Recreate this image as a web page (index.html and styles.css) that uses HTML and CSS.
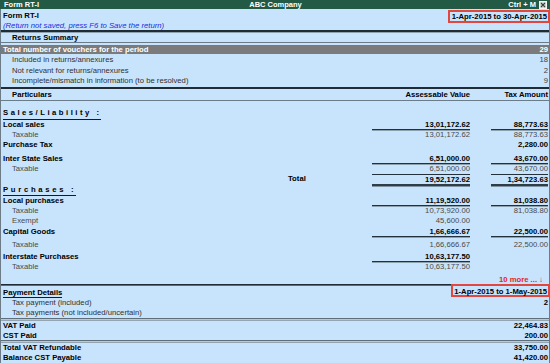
FILE: index.html
```html
<!DOCTYPE html>
<html>
<head>
<meta charset="utf-8">
<link rel="stylesheet" href="styles.css">
</head>
<body>
<div class="titlebar">
  <span class="tb-l">Form RT-I</span>
  <span class="tb-c">ABC Company</span>
  <span class="tb-r">Ctrl + M
    <svg class="closebox" width="8" height="8" viewBox="0 0 8 8"><rect x="0.5" y="0.5" width="7" height="7" fill="#d3dbd8" stroke="#f4f4f4"/><path d="M2 2 L6 6 M6 2 L2 6" stroke="#33403a" stroke-width="1.1"/></svg>
  </span>
</div>
<div class="win">
  <div class="head">
    <div class="head-l">
      <div class="b">Form RT-I</div>
      <div class="note">(Return not saved, press F6 to Save the return)</div>
    </div>
    <div class="period b">1-Apr-2015 to 30-Apr-2015</div>
  </div>
  <div class="rule-dark"></div>
  <div class="sec-title b">Returns Summary</div>
  <div class="rule-thin"></div>
  <div class="graybar"><span class="lbl">Total number of vouchers for the period</span><span class="ta">29</span></div>
  <div class="summary">
    <div class="row srow"><span class="lbl ind">Included in returns/annexures</span><span class="ta">18</span></div>
    <div class="row srow"><span class="lbl ind">Not relevant for returns/annexures</span><span class="ta">2</span></div>
    <div class="row srow"><span class="lbl ind">Incomplete/mismatch in information (to be resolved)</span><span class="ta">9</span></div>
  </div>
  <div class="rule-dark2"></div>
  <div class="row colhead b"><span class="lbl ind">Particulars</span><span class="av">Assessable Value</span><span class="ta">Tax Amount</span></div>
  <div class="rule-thin"></div>

  <div class="row group-title first"><span class="gt">Sales/Liability :</span></div>
  <div class="row b"><span class="lbl">Local sales</span><span class="av u">13,01,172.62</span><span class="ta u">88,773.63</span></div>
  <div class="row sub"><span class="lbl ind">Taxable</span><span class="av">13,01,172.62</span><span class="ta">88,773.63</span></div>
  <div class="row b"><span class="lbl">Purchase Tax</span><span class="av"></span><span class="ta">2,280.00</span></div>
  <div class="row b mt4"><span class="lbl">Inter State Sales</span><span class="av u">6,51,000.00</span><span class="ta u">43,670.00</span></div>
  <div class="row sub"><span class="lbl ind">Taxable</span><span class="av">6,51,000.00</span><span class="ta">43,670.00</span></div>
  <div class="row total b"><span class="lbl total-lbl">Total</span><span class="av">19,52,172.62</span><span class="ta">1,34,723.63</span></div>

  <div class="row group-title second"><span class="gt gt2">Purchases :</span></div>
  <div class="row b"><span class="lbl">Local purchases</span><span class="av u">11,19,520.00</span><span class="ta u">81,038.80</span></div>
  <div class="row sub"><span class="lbl ind">Taxable</span><span class="av">10,73,920.00</span><span class="ta">81,038.80</span></div>
  <div class="row sub"><span class="lbl ind">Exempt</span><span class="av">45,600.00</span><span class="ta"></span></div>
  <div class="row b mt1"><span class="lbl">Capital Goods</span><span class="av u">1,66,666.67</span><span class="ta u">22,500.00</span></div>
  <div class="row sub mt3"><span class="lbl ind">Taxable</span><span class="av">1,66,666.67</span><span class="ta">22,500.00</span></div>
  <div class="row b mt2"><span class="lbl">Interstate Purchases</span><span class="av u">10,63,177.50</span><span class="ta"></span></div>
  <div class="row sub"><span class="lbl ind">Taxable</span><span class="av">10,63,177.50</span><span class="ta"></span></div>

  <div class="more b">10 more ... &#8595;</div>
  <div class="rule-dark3"></div>

  <div class="pay-row">
    <span class="lbl"><span class="pay-title b">Payment Details</span></span>
    <span class="period2 b">1-Apr-2015 to 1-May-2015</span>
  </div>
  <div class="row sub2"><span class="lbl ind">Tax payment (included)</span><span class="ta b blk">2</span></div>
  <div class="row sub2"><span class="lbl ind">Tax payments (not included/uncertain)</span><span class="ta"></span></div>
  <div class="rule-gray"></div>
  <div class="row b r95"><span class="lbl">VAT Paid</span><span class="ta">22,464.83</span></div>
  <div class="row b r95"><span class="lbl">CST Paid</span><span class="ta">200.00</span></div>
  <div class="rule-gray"></div>
  <div class="row b"><span class="lbl">Total VAT Refundable</span><span class="ta">33,750.00</span></div>
  <div class="row b"><span class="lbl">Balance CST Payable</span><span class="ta">41,420.00</span></div>
</div>
</body>
</html>
```

FILE: styles.css
```css
* { box-sizing: border-box; margin: 0; padding: 0; }
html, body { width: 550px; height: 363px; overflow: hidden; }
body {
  background: #c8e4fc;
  font-family: "Liberation Sans", Arial, sans-serif;
  font-size: 7.7px;
  color: #000;
}
.b { font-weight: bold; }

.titlebar {
  height: 9px;
  background: #225a45;
  color: #fff;
  font-weight: bold;
  font-size: 7.5px;
  line-height: 9px;
  display: grid;
  grid-template-columns: 1fr auto 1fr;
  padding: 0 3px 0 4px;
  white-space: nowrap;
}
.tb-r { justify-self: end; display: flex; align-items: center; gap: 3px; }
.closebox { display: block; }

.win {
  height: 354px;
  border-left: 1px solid #6c7b86;
  border-right: 1px solid #6c7b86;
  display: flex;
  flex-direction: column;
}

.head { height: 22px; display: flex; padding-left: 2px; }
.head-l { flex: 1; padding-top: 2px; line-height: 9.5px; }
.note { color: #1a2ce0; font-style: italic; }
.period {
  width: 102px;
  height: 13px;
  margin-top: 1px;
  margin-right: -1px;
  border: 2px solid #e2473f;
  text-align: right;
  line-height: 9px;
  padding-right: 1px;
}

.rule-dark { height: 3px; border-top: 2px solid #1f2c35; border-bottom: 1px solid #8ea2b1; }
.rule-dark2 { height: 2px; margin-top: 0.5px; background: #1f2c35; }
.rule-dark3 { height: 2px; border-top: 1px solid #1f2c35; border-bottom: 1px solid #5c6d79; }
.rule-thin { height: 1px; background: #6a7c89; }
.rule-gray { height: 3px; border-top: 1px solid #5e6f7b; border-bottom: 1px solid #93a5b3; background: #b4c9d9; }

.sec-title { height: 9px; line-height: 9px; padding-left: 11px; }

.graybar {
  margin-top: 2px;
  height: 9px;
  line-height: 9px;
  background: #7b7b7b;
  color: #fff;
  font-weight: bold;
  display: flex;
  padding: 0 1px 0 2px;
}

.summary { padding-top: 1px; }

.row {
  display: flex;
  height: 10px;
  line-height: 10px;
  padding: 0 1px 0 2px;
  white-space: nowrap;
}
.srow { height: 10.5px; line-height: 10.5px; color: #303030; }
.srow .ta { color: #404040; }
.colhead { height: 11px; line-height: 11px; }

.lbl { flex: 1; }
.ind { padding-left: 9px; }
.av { width: 98px; text-align: right; }
.ta { width: 57px; margin-left: 21px; text-align: right; }
.graybar .ta { margin-left: 0; }

.u { border-bottom: 1px solid #23313c; line-height: 9px; box-shadow: 0 1px 0 #8da0ae; }

.sub { color: #4a4a4a; }
.sub2 { color: #303030; }
.blk { color: #000; }

.mt1 { margin-top: 1px; }
.mt2 { margin-top: 2px; }
.mt3 { margin-top: 3px; }
.mt4 { margin-top: 4px; }

.group-title { height: 12px; line-height: 9px; font-weight: bold; align-items: flex-start; }
.group-title.first { margin-top: 7px; }
.group-title.second { height: 10px; line-height: 8px; }
.gt {
  display: inline-block;
  letter-spacing: 2.5px;
  border-bottom: 1px solid #1a1a1a;
  padding-bottom: 2px;
}
.gt2 { padding-bottom: 1px; letter-spacing: 2.7px; }

.total { height: 12px; line-height: 9px; }
.total .av, .total .ta {
  border-top: 1px solid #23313c;
  border-bottom: 2px solid #2f3d48;
  box-shadow: 0 1px 0 #7f93a2;
}
.total-lbl { padding-left: 285px; }

.more {
  margin-top: 3px;
  height: 9px;
  line-height: 9px;
  text-align: right;
  padding-right: 6px;
  color: #e3232b;
}

.pay-row {
  display: flex;
  height: 12px;
  padding-left: 2px;
  white-space: nowrap;
}
.pay-title {
  display: inline-block;
  margin-top: 3px;
  line-height: 8px;
  border-bottom: 1px solid #1a1a1a;
}
.period2 {
  width: 99px;
  height: 13px;
  margin-top: -2px;
  margin-right: -1px;
  border: 2px solid #e2473f;
  text-align: right;
  line-height: 10px;
  padding-top: 1px;
  padding-right: 1px;
}
.r95 { height: 9.5px; line-height: 9.5px; }
```
